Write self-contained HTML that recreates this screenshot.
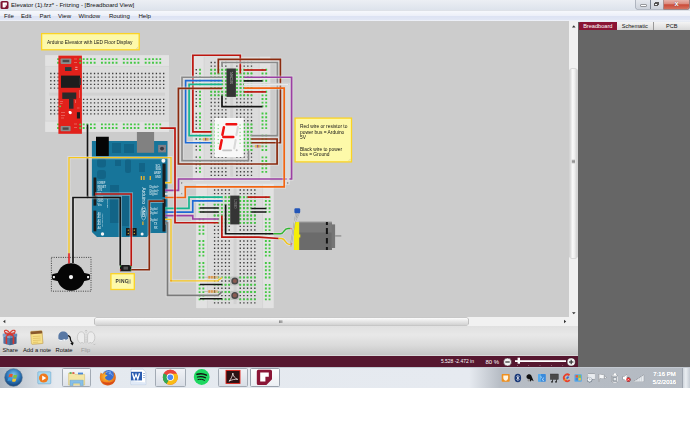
<!DOCTYPE html>
<html>
<head>
<meta charset="utf-8">
<title>Fritzing</title>
<style>
html,body{margin:0;padding:0;}
body{width:690px;height:424px;background:#ffffff;overflow:hidden;position:relative;font-family:"Liberation Sans",sans-serif;}
.abs{position:absolute;}
#titlebar{left:0;top:0;width:690px;height:10px;background:linear-gradient(#eceff4,#dde3ec);}
#titleline{left:0;top:9.600px;width:690px;height:1.400px;background:linear-gradient(#c9ced6,#f2f4f8);}
#title{left:11px;top:1px;font-size:6.05px;line-height:8px;color:#111;white-space:nowrap;}
#menubar{left:0;top:11px;width:690px;height:10px;background:linear-gradient(#f6f8fc 0%,#edf0f9 45%,#dde3f3 55%,#e2e7f5 88%,#f4f6fa 100%);}
.menu{top:12px;font-size:6.05px;line-height:8px;color:#111;white-space:nowrap;}
#canvas{left:0;top:21px;width:569px;height:295.500px;background:#cccccc;}
#vscroll{left:569px;top:21px;width:9px;height:296px;background:#f1f1f1;}
#rpanel{left:578px;top:21px;width:112px;height:346px;background:#666666;}
#hscroll{left:0;top:316.500px;width:578px;height:9.500px;background:#f1f1f1;}
#toolbar{left:0;top:326px;width:578px;height:30px;background:linear-gradient(#e0e0e0 0%,#e8e8e8 30%,#dadada 65%,#c6c6c6 96%,#e4e4e4 100%);}
#status{left:0;top:356px;width:578px;height:11px;background:#56172f;}
#taskbar{left:0;top:367px;width:690px;height:21px;background:linear-gradient(90deg,#aeb7c1 0,#c9d0d8 3.500%,#e4e9ef 8%,#e6eaf0 68%,#b7bdc5 72.500%,#b4bac2 100%);}
.tab{top:22px;height:8px;font-size:5.6px;line-height:8px;text-align:center;color:#111;background:linear-gradient(#f4f4f4,#d8d8d8);}
.tlabel{top:346px;font-size:5.8px;line-height:8px;color:#111;white-space:nowrap;}
.st{top:358px;font-size:4.950px;line-height:8px;color:#ffffff;white-space:nowrap;}
</style>
</head>
<body>
<div id="titlebar" class="abs"></div>
<div id="titleline" class="abs"></div>
<!-- fritzing app icon -->
<svg class="abs" style="left:0;top:1px" width="9" height="8" viewBox="0 0 9 8"><rect x="0.5" y="0" width="8" height="8" rx="1.6" fill="#7d1231"/><path d="M2.6 1.6h4.3v2.2l-2 2.6h-2.3z" fill="#fff"/><path d="M4.6 3.6h2.3l-2 2.8z" fill="#e9c9d2"/></svg>
<div id="title" class="abs">Elevator (1).fzz* - Fritzing - [Breadboard View]</div>
<!-- window buttons -->
<div class="abs" style="left:636px;top:0;width:53px;height:8.5px;border-radius:0 0 2px 2px;background:linear-gradient(#e6e9ee,#cdd2db);box-shadow:0 0 0 0.6px #8a929e;"></div>
<div class="abs" style="left:650px;top:0;width:0.7px;height:8.5px;background:#7a8390;"></div>
<div class="abs" style="left:663.5px;top:0;width:25.5px;height:8.5px;border-radius:0 0 2px 0;background:linear-gradient(#e6b3ab 0%,#db8a7d 45%,#cb4b39 52%,#d5715e 100%);box-shadow:0 0 0 0.6px #8a5a54;"></div>
<div class="abs" style="left:640.5px;top:4.6px;width:5px;height:1.6px;background:#fff;box-shadow:0 0 0 0.5px #555;"></div>
<div class="abs" style="left:655.300px;top:1.600px;width:3.800px;height:3.400px;border:0.600px solid #555;background:#eef0f3;box-sizing:border-box;"></div><div class="abs" style="left:654px;top:2.800px;width:3.800px;height:3.400px;border:0.600px solid #555;background:#f6f7f9;box-sizing:border-box;"></div>
<div class="abs" style="left:673px;top:0.2px;width:7px;height:8px;font-size:7.5px;line-height:8px;font-weight:bold;color:#fff;text-align:center;text-shadow:0 0 1px #522;">x</div>
<div id="menubar" class="abs"></div>
<div class="abs menu" style="left:4px">File</div>
<div class="abs menu" style="left:21px">Edit</div>
<div class="abs menu" style="left:39.5px">Part</div>
<div class="abs menu" style="left:58px">View</div>
<div class="abs menu" style="left:78.5px">Window</div>
<div class="abs menu" style="left:109px">Routing</div>
<div class="abs menu" style="left:138.5px">Help</div>

<div id="canvas" class="abs"></div>
<svg class="abs" style="left:0;top:21px;filter:blur(0.28px)" width="569" height="295.5" viewBox="0 21 569 295.5" font-family="Liberation Sans, sans-serif">
<rect x="45.25" y="55.25" width="123.75" height="76.65" fill="#dcdcdc"/>
<rect x="45.25" y="55.25" width="123.75" height="11" fill="#e2e2e2"/>
<rect x="45.25" y="121.25" width="123.75" height="10.6" fill="#e2e2e2"/>
<rect x="49.25" y="92.6" width="115.75" height="3" fill="#d1d1d1"/>
<path d="M45.25 66.4h123.75M45.25 121.2h123.75" stroke="#cdcdcd" stroke-width="0.5"/>
<path d="M50.17 73.5h114.34M50.17 77.14h114.34M50.17 80.79h114.34M50.17 84.44h114.34M50.17 88.08h114.34M50.17 99.3h114.34M50.17 102.94h114.34M50.17 106.59h114.34M50.17 110.23h114.34M50.17 113.88h114.34" stroke="#3c3c3c" stroke-width="1.35" stroke-dasharray="1.35 2.29" fill="none"/>
<path d="M57.18 59.1h103.96M57.18 62.75h103.96M57.18 124.4h103.96M57.18 128h103.96" stroke="#42c842" stroke-width="1.9" stroke-dasharray="1.9 1.75 1.9 1.75 1.9 1.75 1.9 1.75 1.9 5.39" fill="none"/>
<rect x="192.9" y="56.8" width="77.3" height="123.75" fill="#dcdcdc"/>
<rect x="192.9" y="56.8" width="11" height="123.75" fill="#e2e2e2"/>
<rect x="259.4" y="56.8" width="10.8" height="123.75" fill="#e2e2e2"/>
<rect x="230.2" y="60.8" width="3" height="115.75" fill="#d1d1d1"/>
<path d="M204.1 56.8v123.75M259.2 56.8v123.75" stroke="#cdcdcd" stroke-width="0.5"/>
<path d="M211.25 61.83v114.34M214.9 61.83v114.34M218.54 61.83v114.34M222.19 61.83v114.34M225.83 61.83v114.34M236.9 61.83v114.34M240.55 61.83v114.34M244.19 61.83v114.34M247.84 61.83v114.34M251.48 61.83v114.34" stroke="#3c3c3c" stroke-width="1.35" stroke-dasharray="1.35 2.29" fill="none"/>
<path d="M196.25 69.12v103.41" stroke="#3c3c3c" stroke-width="1.35" stroke-dasharray="1.35 2.29 1.35 2.29 1.35 2.29 1.35 2.29 1.35 5.94" fill="none"/>
<path d="M200 68.84v103.96M262.5 68.84v103.96M266.2 68.84v103.96" stroke="#42c842" stroke-width="1.9" stroke-dasharray="1.9 1.75 1.9 1.75 1.9 1.75 1.9 1.75 1.9 5.39" fill="none"/>
<path d="M211.25 68.84v27.41M214.9 68.84v27.41M218.54 68.84v27.41M222.19 68.84v27.41M225.83 68.84v27.41M236.9 68.84v27.41M240.55 68.84v27.41M244.19 68.84v27.41M247.84 68.84v27.41M251.48 68.84v27.41M211.25 123.52v27.41M214.9 123.52v27.41M218.54 123.52v27.41M222.19 123.52v27.41M225.83 123.52v27.41M236.9 123.52v27.41M240.55 123.52v27.41M244.19 123.52v27.41M247.84 123.52v27.41M251.48 123.52v27.41" stroke="#42c842" stroke-width="1.9" stroke-dasharray="1.9 1.75" fill="none"/>
<rect x="196.25" y="184.3" width="77.3" height="123.75" fill="#dcdcdc"/>
<rect x="196.25" y="184.3" width="11" height="123.75" fill="#e2e2e2"/>
<rect x="262.75" y="184.3" width="10.8" height="123.75" fill="#e2e2e2"/>
<rect x="233.55" y="188.3" width="3" height="115.75" fill="#d1d1d1"/>
<path d="M207.45 184.3v123.75M262.55 184.3v123.75" stroke="#cdcdcd" stroke-width="0.5"/>
<path d="M214.6 189.32v114.34M218.25 189.32v114.34M221.89 189.32v114.34M225.53 189.32v114.34M229.18 189.32v114.34M240.25 189.32v114.34M243.9 189.32v114.34M247.54 189.32v114.34M251.19 189.32v114.34M254.83 189.32v114.34" stroke="#3c3c3c" stroke-width="1.35" stroke-dasharray="1.35 2.29" fill="none"/>
<path d="M199.6 196.34v103.96M203.35 196.34v103.96M265.85 196.34v103.96M269.55 196.34v103.96" stroke="#42c842" stroke-width="1.9" stroke-dasharray="1.9 1.75 1.9 1.75 1.9 1.75 1.9 1.75 1.9 5.39" fill="none"/>
<path d="M214.6 196.34v27.41M218.25 196.34v27.41M221.89 196.34v27.41M225.53 196.34v27.41M229.18 196.34v27.41M240.25 196.34v27.41M243.9 196.34v27.41M247.54 196.34v27.41M251.19 196.34v27.41M254.83 196.34v27.41" stroke="#42c842" stroke-width="1.9" stroke-dasharray="1.9 1.75" fill="none"/>
<path d="M213.65 277.48h16.48M239.3 277.48h16.48M213.65 284.77h16.48M239.3 284.77h16.48M213.65 292.06h16.48M239.3 292.06h16.48M213.65 299.35h16.48M239.3 299.35h16.48" stroke="#42c842" stroke-width="1.9" stroke-dasharray="1.9 1.75" fill="none"/>
<!-- red power board -->
<rect x="58.4" y="55.6" width="23.5" height="78.2" fill="#e1211b"/>
<rect x="60.6" y="58.4" width="10.7" height="5.5" rx="0.8" fill="#8d8d8d"/><rect x="62.600" y="59.800" width="6.700" height="2.400" fill="#4a4a4a"/>
<rect x="65" y="67.1" width="6.5" height="3.9" fill="#2c3a3c"/>
<path d="M75.200 67.300h2.300M75.200 69.500h2.300" stroke="#f6dada" stroke-width="0.700"/>
<rect x="61" y="75.6" width="19" height="12.2" fill="#1d1d1d"/><rect x="79.500" y="78" width="1.500" height="7" fill="#3a3a3a"/>
<rect x="62.25" y="92.5" width="14" height="6.4" fill="#2a2a2a"/>
<rect x="69" y="98.9" width="4.5" height="9.8" fill="#2a2d30"/>
<rect x="76.9" y="112.2" width="3.1" height="6.3" fill="#1d1d1d"/>
<path d="M68.800 111.300c1.200-0.600 2.800 0 3 1.200c0.200 1.400-1.600 2.200-2.600 1.200c-0.600-0.800-0.900-1.700-0.400-2.400z" fill="#fff"/>
<circle cx="60.200" cy="106.300" r="0.900" fill="#5cd65c"/>
<path d="M60 101.500h3M60 103.500h2.500M61 112.500h4M61 115.500h4M61 118h3M75.500 100v3M77 108h2.500M74 59h3M74 62.500h3M74 124h3M74 127.500h3M79.500 90v8" stroke="#f4b8b4" stroke-width="0.500" opacity="0.800"/>
<rect x="60.6" y="126" width="10" height="5.2" rx="0.8" fill="#8d8d8d"/><rect x="62.600" y="127.400" width="6" height="2.400" fill="#4a4a4a"/>
<path d="M80.200 58.200a1 1 0 1 0 0.010 0zM80.200 61.800a1 1 0 1 0 0.010 0zM80.200 123.500a1 1 0 1 0 0.010 0zM80.200 127.100a1 1 0 1 0 0.010 0z" fill="#4fd04f"/>

<!-- arduino uno -->
<path d="M91.9 140.9H167.5V233.1H150.6L147 236.9H97L91.9 232Z" fill="#17759a"/>
<g fill="#126487">
<rect x="97" y="158.500" width="9" height="9" rx="3"/><rect x="97" y="170" width="9" height="9" rx="3"/>
<rect x="115" y="160" width="6" height="6"/><rect x="125" y="159" width="6" height="14" rx="2.500"/>
<rect x="139" y="163" width="6" height="9"/><rect x="110" y="185" width="9" height="38"/><rect x="122" y="196" width="7" height="30"/>
<rect x="112" y="143" width="9" height="10"/><rect x="124" y="144" width="10" height="9"/>
</g>
<rect x="96" y="136.75" width="12.8" height="19.4" fill="#050505"/>
<rect x="136.9" y="132" width="17.2" height="20.800" fill="#818181"/>
<rect x="158.1" y="144.9" width="7.900" height="7.500" fill="#7e7e86"/><circle cx="162" cy="148.600" r="2.400" fill="#3a3a42" stroke="#a4a4ac" stroke-width="0.500"/>
<circle cx="163.4" cy="160.75" r="2" fill="#f4f4f4"/><circle cx="102.5" cy="234" r="1.700" fill="#f4f4f4"/><circle cx="142.1" cy="234" r="1.500" fill="#f4f4f4"/>
<rect x="162.5" y="163.6" width="3.100" height="33.500" fill="#1c1c1c"/><rect x="162.5" y="199" width="3.100" height="32.500" fill="#1c1c1c"/>
<rect x="93.5" y="177.5" width="2.800" height="28.100" fill="#1c1c1c"/><rect x="93.5" y="210.6" width="2.800" height="20.700" fill="#1c1c1c"/>
<rect x="126" y="228" width="4.600" height="7.600" fill="#1a1a1a"/><rect x="132" y="228" width="4.600" height="7.600" fill="#1a1a1a"/>
<path d="M128.300 230.200h0.010M128.300 233.400h0.010M134.300 230.200h0.010M134.300 233.400h0.010" stroke="#d8b040" stroke-width="1.300" stroke-linecap="round"/>
<rect x="140.700" y="176" width="1.300" height="4" fill="#f0b428"/><rect x="143.300" y="176" width="1.300" height="4" fill="#f0b428"/><rect x="149.600" y="176" width="1.300" height="4" fill="#f0b428"/>
<rect x="142.300" y="221.500" width="1.200" height="3.500" fill="#f0b428"/>
<g font-size="2.600" fill="#e6f2f6" fill-opacity="0.780" font-weight="bold"><text x="155.500" y="166.800">SCL</text><text x="155.500" y="170.400">SDA</text><text x="154" y="174">AREF</text><text x="155" y="177.700">GND</text>
<text x="149.500" y="187.800">Digital~</text><text x="149.500" y="191.500">Digital~</text><text x="149.500" y="195.200">Digital</text><text x="149.500" y="209.800">Digital</text><text x="149.500" y="213.500">Digital</text><text x="149.500" y="220.700">Digital</text>
<text x="97.500" y="184">IOREF</text><text x="97.500" y="187.700">RESET</text><text x="97.500" y="191.300">3V3</text><text x="97.500" y="195">5V</text><text x="97.500" y="198.600">GND</text><text x="97.500" y="202.200">GND</text><text x="97.500" y="205.800">Vin</text><text x="97.500" y="214.500">A0</text><text x="97.500" y="218.100">A1</text><text x="97.500" y="221.700">A2</text><text x="97.500" y="225.300">A3</text><text x="97.500" y="228.900">A4</text><text x="154" y="225">TX</text><text x="154" y="228.800">RX</text></g>
<g fill="#e6f2f6"><text transform="translate(141.600 187.600) rotate(90)" font-size="4.700">Arduino</text><text transform="translate(142 207.800) rotate(90)" font-size="4.200" font-weight="bold">UNO</text></g>
<ellipse cx="143.600" cy="213.200" rx="2.500" ry="6.800" fill="none" stroke="#e6f2f6" stroke-width="0.500"/>
<g font-size="2.400" fill="#cfe6ee"><text transform="translate(106.500 199) rotate(90)">POWER</text><text transform="translate(101.800 213.500) rotate(90)">ANALOG IN</text></g>

<!-- 7 segment display -->
<rect x="214.500" y="118" width="29.100" height="39" fill="#f8f8f8"/>
<g stroke="#d9d9d9" stroke-width="2.100" stroke-linecap="round"><path d="M237.900 127l-1.500 8M235.700 140l-1.500 8.400"/><path d="M223 150.300h8.300" stroke="#c4c4c4" stroke-width="1.700"/></g><circle cx="236.700" cy="150.300" r="1" fill="#bdbdbd"/>
<g stroke="#f01212" stroke-width="2.500" stroke-linecap="round"><path d="M226.500 124.200h9.700M223.900 127.300l-1.500 7.400M223.300 136.900h10M221.700 140.200l-1.700 8.600"/></g>
<path d="M218.200 124.500v22M240.100 124.500v22" stroke="#49c949" stroke-width="1" stroke-dasharray="1 2.645"/>

<!-- ICs -->
<rect x="226.500" y="68.500" width="9.400" height="28.400" fill="#353535"/>
<text transform="translate(229.700 71.500) rotate(90)" font-size="3" fill="#bdbdbd">74HC595</text>
<rect x="230.200" y="195.600" width="9.300" height="28.800" fill="#353535"/>
<text transform="translate(233.700 199.500) rotate(90)" font-size="3" fill="#9a9a9a">L293D</text>

<!-- ping connector -->
<rect x="120" y="265" width="11.300" height="6.300" fill="#1a1a1a"/><rect x="123.500" y="266.600" width="4.500" height="3" fill="#555"/>
<circle cx="120.400" cy="266" r="0.700" fill="#3c3"/><circle cx="120.400" cy="270" r="0.700" fill="#e33"/><circle cx="131" cy="266" r="0.700" fill="#3c3"/><circle cx="131" cy="270" r="0.700" fill="#3c3"/>
<!-- pushbuttons -->
<g><rect x="230.600" y="276.900" width="8.400" height="8.200" rx="1" fill="#c9c9c9" stroke="#aaa" stroke-width="0.400"/><circle cx="234.800" cy="281" r="3.500" fill="#4a4a4a"/><circle cx="234.800" cy="281" r="2.100" fill="#8a5a52"/>
<rect x="230.600" y="291.300" width="8.400" height="8.200" rx="1" fill="#c9c9c9" stroke="#aaa" stroke-width="0.400"/><circle cx="234.800" cy="295.400" r="3.500" fill="#4a4a4a"/><circle cx="234.800" cy="295.400" r="2.100" fill="#8a5a52"/></g>
<path d="M87.5 124.400V197.500H95" stroke="#f4f4f4" stroke-opacity="0.38" stroke-width="3.5" fill="none"/><path d="M87.5 124.400V197.500H95" stroke="#141414" stroke-width="1.7" fill="none" stroke-linejoin="miter" />
<path d="M73 263V197.500H88" stroke="#f4f4f4" stroke-opacity="0.38" stroke-width="3.5" fill="none"/><path d="M73 263V197.500H88" stroke="#141414" stroke-width="1.7" fill="none" stroke-linejoin="miter" />
<path d="M165 182.750H171V157.600H69V253.200" stroke="#f4f4f4" stroke-opacity="0.38" stroke-width="3.1500000000000004" fill="none"/><path d="M165 182.750H171V157.600H69V253.200" stroke="#f7c61c" stroke-width="1.35" fill="none" stroke-linejoin="miter" />
<path d="M165 219.400H171V280.800H217.750L222.250 277.250" stroke="#f4f4f4" stroke-opacity="0.38" stroke-width="3.1500000000000004" fill="none"/><path d="M165 219.400H171V280.800H217.750L222.250 277.250" stroke="#f7c61c" stroke-width="1.35" fill="none" stroke-linejoin="miter" />
<path d="M165 222.900H167.500V295.400H218L222.250 291.500" stroke="#f4f4f4" stroke-opacity="0.38" stroke-width="3.55" fill="none"/><path d="M165 222.900H167.500V295.400H218L222.250 291.500" stroke="#7a7a7a" stroke-width="1.75" fill="none" stroke-linejoin="miter" />
<path d="M95 194H131.250V266" stroke="#f4f4f4" stroke-opacity="0.38" stroke-width="3.5" fill="none"/><path d="M95 194H131.250V266" stroke="#bd140e" stroke-width="1.7" fill="none" stroke-linejoin="miter" />
<path d="M95 197.500H120.250V265.600" stroke="#f4f4f4" stroke-opacity="0.38" stroke-width="3.5" fill="none"/><path d="M95 197.500H120.250V265.600" stroke="#141414" stroke-width="1.7" fill="none" stroke-linejoin="miter" />
<path d="M164 201.200H149.300V269.750H131.250" stroke="#f4f4f4" stroke-opacity="0.38" stroke-width="3.5" fill="none"/><path d="M164 201.200H149.300V269.750H131.250" stroke="#8a2a0e" stroke-width="1.7" fill="none" stroke-linejoin="miter" />
<path d="M211.250 131.900H192.900V55.250H240.300V73.600" stroke="#f4f4f4" stroke-opacity="0.38" stroke-width="3.5" fill="none"/><path d="M211.250 131.900H192.900V55.250H240.300V73.600" stroke="#bd140e" stroke-width="1.7" fill="none" stroke-linejoin="miter" />
<path d="M218.300 73.600V59.400H280.400V142.750H251.250" stroke="#f4f4f4" stroke-opacity="0.38" stroke-width="3.5" fill="none"/><path d="M218.300 73.600V59.400H280.400V142.750H251.250" stroke="#8a2a0e" stroke-width="1.7" fill="none" stroke-linejoin="miter" />
<path d="M222 66.200V62.500H277.400V135.600H251.250" stroke="#f4f4f4" stroke-opacity="0.38" stroke-width="3.5" fill="none"/><path d="M222 66.200V62.500H277.400V135.600H251.250" stroke="#8a8a8a" stroke-width="1.7" fill="none" stroke-linejoin="miter" />
<path d="M222 77.250H182V160.600H248.500V150.500" stroke="#f4f4f4" stroke-opacity="0.38" stroke-width="3.5" fill="none"/><path d="M222 77.250H182V160.600H248.500V150.500" stroke="#8a8a8a" stroke-width="1.7" fill="none" stroke-linejoin="miter" />
<path d="M222 80.700H185.600V142.750H211.250" stroke="#f4f4f4" stroke-opacity="0.38" stroke-width="3.5" fill="none"/><path d="M222 80.700H185.600V142.750H211.250" stroke="#1e6ad4" stroke-width="1.7" fill="none" stroke-linejoin="miter" />
<path d="M222 84.400H189.100V135.600H211.250" stroke="#f4f4f4" stroke-opacity="0.38" stroke-width="3.5" fill="none"/><path d="M222 84.400H189.100V135.600H211.250" stroke="#14b48e" stroke-width="1.7" fill="none" stroke-linejoin="miter" />
<path d="M222 88.300H178.400V164H277.100V139H251.250" stroke="#f4f4f4" stroke-opacity="0.38" stroke-width="3.5" fill="none"/><path d="M222 88.300H178.400V164H277.100V139H251.250" stroke="#8a2a0e" stroke-width="1.7" fill="none" stroke-linejoin="miter" />
<path d="M244 70H266" stroke="#f4f4f4" stroke-opacity="0.38" stroke-width="3.5" fill="none"/><path d="M244 70H266" stroke="#bd140e" stroke-width="1.7" fill="none" stroke-linejoin="miter" />
<path d="M244 91.900H266" stroke="#f4f4f4" stroke-opacity="0.38" stroke-width="3.5" fill="none"/><path d="M244 91.900H266" stroke="#bd140e" stroke-width="1.7" fill="none" stroke-linejoin="miter" />
<path d="M244 80.900H262.500" stroke="#f4f4f4" stroke-opacity="0.38" stroke-width="3.5" fill="none"/><path d="M244 80.900H262.500" stroke="#141414" stroke-width="1.7" fill="none" stroke-linejoin="miter" />
<path d="M244 77.250H291.600V179H178.500V190.300H165" stroke="#f4f4f4" stroke-opacity="0.38" stroke-width="3.5" fill="none"/><path d="M244 77.250H291.600V179H178.500V190.300H165" stroke="#9b3fa3" stroke-width="1.7" fill="none" stroke-linejoin="miter" />
<path d="M244 84.400H288V183.100H182V193.900H165" stroke="#f4f4f4" stroke-opacity="0.38" stroke-width="3.4000000000000004" fill="none"/><path d="M244 84.400H288V183.100H182V193.900H165" stroke="#a4a4a4" stroke-width="1.6" fill="none" stroke-linejoin="miter" />
<path d="M244 84.400H288V183.100H182V193.900H165" stroke="#f4f4f4" stroke-opacity="0.38" stroke-width="2.7" fill="none"/><path d="M244 84.400H288V183.100H182V193.900H165" stroke="#f2f2f2" stroke-width="0.9" fill="none" stroke-linejoin="miter" />
<path d="M244 88.100H284.200V186.900H185.300V197.500H165" stroke="#f4f4f4" stroke-opacity="0.38" stroke-width="3.5" fill="none"/><path d="M244 88.100H284.200V186.900H185.300V197.500H165" stroke="#f26411" stroke-width="1.7" fill="none" stroke-linejoin="miter" />
<path d="M222 95.600V106.600H262.500" stroke="#f4f4f4" stroke-opacity="0.38" stroke-width="3.5" fill="none"/><path d="M222 95.600V106.600H262.500" stroke="#141414" stroke-width="1.7" fill="none" stroke-linejoin="miter" />
<path d="M165 208.400H189V197.100H222.500" stroke="#f4f4f4" stroke-opacity="0.38" stroke-width="3.5" fill="none"/><path d="M165 208.400H189V197.100H222.500" stroke="#14b48e" stroke-width="1.7" fill="none" stroke-linejoin="miter" />
<path d="M165 212.100H192.750V200.900H222.500" stroke="#f4f4f4" stroke-opacity="0.38" stroke-width="3.5" fill="none"/><path d="M165 212.100H192.750V200.900H222.500" stroke="#1e6ad4" stroke-width="1.7" fill="none" stroke-linejoin="miter" />
<path d="M165 215.600H192.750V219H218.750" stroke="#f4f4f4" stroke-opacity="0.38" stroke-width="3.5" fill="none"/><path d="M165 215.600H192.750V219H218.750" stroke="#9b3fa3" stroke-width="1.7" fill="none" stroke-linejoin="miter" />
<path d="M160.500 128.200H175V222.750H218.500" stroke="#f4f4f4" stroke-opacity="0.38" stroke-width="3.5" fill="none"/><path d="M160.500 128.200H175V222.750H218.500" stroke="#bd140e" stroke-width="1.7" fill="none" stroke-linejoin="miter" />
<path d="M200 208.100H218.750M200 211.900H218.750M251.250 208.400H266.250M251.250 212.100H266.250M200 284.600H222.250M200 298.750H222.250" stroke="#f4f4f4" stroke-opacity="0.38" stroke-width="3.3" fill="none"/><path d="M200 208.100H218.750M200 211.900H218.750M251.250 208.400H266.250M251.250 212.100H266.250M200 284.600H222.250M200 298.750H222.250" stroke="#141414" stroke-width="1.5" fill="none" stroke-linejoin="miter" />
<path d="M247.500 197.100H269.750" stroke="#f4f4f4" stroke-opacity="0.38" stroke-width="3.5" fill="none"/><path d="M247.500 197.100H269.750" stroke="#bd140e" stroke-width="1.7" fill="none" stroke-linejoin="miter" />
<path d="M225.600 204.400V233.750H273.750" stroke="#f4f4f4" stroke-opacity="0.38" stroke-width="3.5" fill="none"/><path d="M225.600 204.400V233.750H273.750" stroke="#141414" stroke-width="1.7" fill="none" stroke-linejoin="miter" />
<path d="M273.500 233.750H280.500C284.500 233.750 283.500 228.500 288 228.500H290.200" stroke="#f4f4f4" stroke-opacity="0.38" stroke-width="3.2" fill="none"/><path d="M273.500 233.750H280.500C284.500 233.750 283.500 228.500 288 228.500H290.200" stroke="#2fb52f" stroke-width="1.4" fill="none" stroke-linejoin="miter" />
<path d="M221.900 215.600V237.100H258.750L278.750 238.500" stroke="#f4f4f4" stroke-opacity="0.38" stroke-width="3.5" fill="none"/><path d="M221.900 215.600V237.100H258.750L278.750 238.500" stroke="#bd140e" stroke-width="1.7" fill="none" stroke-linejoin="miter" />
<path d="M278.500 238.500H281.500C285.500 238.500 285.500 244.400 289 244.400H290.800" stroke="#f4f4f4" stroke-opacity="0.38" stroke-width="3.2" fill="none"/><path d="M278.500 238.500H281.500C285.500 238.500 285.500 244.400 289 244.400H290.800" stroke="#f2c414" stroke-width="1.4" fill="none" stroke-linejoin="miter" />
<path d="M200 139.2H212" stroke="#a8a8a8" stroke-width="0.600"/><rect x="202.64" y="137.90" width="6.72" height="2.600" rx="0.900" fill="#d9b888"/><rect x="203.54" y="137.90" width="0.900" height="2.600" fill="#e0c020"/><rect x="205.01" y="137.90" width="0.900" height="2.600" fill="#8a3a8a"/><rect x="206.48" y="137.90" width="0.900" height="2.600" fill="#c87a1a"/>
<path d="M252 146.25H263.75" stroke="#a8a8a8" stroke-width="0.600"/><rect x="254.59" y="144.95" width="6.58" height="2.600" rx="0.900" fill="#d9b888"/><rect x="255.49" y="144.95" width="0.900" height="2.600" fill="#e0c020"/><rect x="256.91" y="144.95" width="0.900" height="2.600" fill="#8a3a8a"/><rect x="258.33" y="144.95" width="0.900" height="2.600" fill="#c87a1a"/>
<path d="M203.75 277.25H222.25" stroke="#a8a8a8" stroke-width="0.600"/><rect x="207.82" y="275.95" width="10.36" height="2.600" rx="0.900" fill="#d9b888"/><rect x="208.72" y="275.95" width="0.900" height="2.600" fill="#e07a1a"/><rect x="211.49" y="275.95" width="0.900" height="2.600" fill="#e07a1a"/><rect x="214.26" y="275.95" width="0.900" height="2.600" fill="#7a4a1a"/>
<path d="M203.75 291.5H222.25" stroke="#a8a8a8" stroke-width="0.600"/><rect x="207.82" y="290.20" width="10.36" height="2.600" rx="0.900" fill="#d9b888"/><rect x="208.72" y="290.20" width="0.900" height="2.600" fill="#e07a1a"/><rect x="211.49" y="290.20" width="0.900" height="2.600" fill="#e07a1a"/><rect x="214.26" y="290.20" width="0.900" height="2.600" fill="#7a4a1a"/>
<g fill="#efefef" stroke="#888" stroke-width="0.300"><rect x="181.200" y="182.400" width="1.500" height="1.500"/><rect x="181.200" y="193.100" width="1.500" height="1.500"/><rect x="287.300" y="182.400" width="1.500" height="1.500"/></g>
<g fill="#f0a020"><rect x="170.300" y="280" width="1.500" height="1.500"/></g>
<!-- motor -->
<rect x="298.750" y="221.900" width="33.200" height="28.100" fill="#6b6b6b"/>
<rect x="298.750" y="221.900" width="33.200" height="10.600" fill="#7a7a7a"/>
<rect x="298.750" y="221.900" width="33.200" height="1.200" fill="#8e8e8e"/>
<rect x="331.900" y="224.400" width="3.200" height="23.600" fill="#757575"/>
<rect x="335.100" y="235.100" width="6.200" height="1.600" fill="#9a9a9a"/>
<path d="M326.900 222v3M326.900 228v6M326.900 238v5.500M326.900 247v3" stroke="#141414" stroke-width="2"/>
<path d="M293.900 221.900h5.300v28.100h-5.300zM299 234.500h1.300v3h-1.300z" fill="#f6ee08"/>
<path d="M296.200 213l-5.600 33.500M299 213l-4.600 9.500" stroke="#8c8c8c" stroke-width="1.500" fill="none"/>
<path d="M296.200 213l-5.600 33.500M299 213l-4.600 9.500" stroke="#f0f0f0" stroke-width="0.600" fill="none"/>
<rect x="294.400" y="208.200" width="5.800" height="5" rx="1.200" fill="#2456b8"/>
<path d="M290.300 228.300l1.500 0.600M290.800 244.300l1.400-0.600" stroke="#e44" stroke-width="1"/>

<!-- buzzer -->
<rect x="51.4" y="257.4" width="39.600" height="33.800" fill="none" stroke="#1c1c1c" stroke-width="0.800" stroke-dasharray="1 1.300"/>
<path d="M58.500 272.800l-5.500 1.200a1.200 1.200 0 0 0 -1 1.200v3.600a1.200 1.200 0 0 0 1 1.200l5.500 1.200zM83.500 272.800l5.500 1.200a1.200 1.200 0 0 1 1 1.200v3.600a1.200 1.200 0 0 1 -1 1.200l-5.500 1.200z" fill="#060606"/>
<circle cx="71" cy="277" r="13.800" fill="#050505"/>
<circle cx="71" cy="277.100" r="2.100" fill="#f6f6f6"/>
<rect x="52.900" y="276" width="2" height="2.200" fill="#f0f0f0"/><rect x="87.100" y="276" width="2" height="2.200" fill="#f0f0f0"/>
<path d="M69 253.200V263.500" stroke="#e81414" stroke-width="1.500"/>

<!-- notes -->
<rect x="41.6" y="33.6" width="97.6" height="16.2" fill="#fdf9a9" stroke="#fbd324" stroke-width="1.3"/>
<text x="47" y="43.9" font-size="4.8" fill="#151515">Arduino Elevator with LED Floor Display</text>
<path d="M136.2 48.800l2-2M137.400 48.800l0.800-0.800" stroke="#b9b38a" stroke-width="0.400"/>
<rect x="295.1" y="118.1" width="56.4" height="43.8" fill="#fdf9a9" stroke="#fbd324" stroke-width="1.3"/>
<g font-size="4.85" fill="#151515"><text x="300" y="127.9">Red wire or resistor to</text><text x="300" y="133.55">power bus = Arduino</text><text x="300" y="139.2">5V</text><text x="300" y="150.5">Black wire to power</text><text x="300" y="156.15">bus = Ground</text></g>
<path d="M348.5 160.900l2-2M349.700 160.900l0.800-0.800" stroke="#b9b38a" stroke-width="0.400"/>
<rect x="110.9" y="273.7" width="23.4" height="15.8" fill="#fdf9a9" stroke="#fbd324" stroke-width="1.3"/>
<text x="115.6" y="283.2" font-size="4.9" font-weight="bold" fill="#333" letter-spacing="0.35">PING</text><text x="127.2" y="283.400" font-size="5" fill="#8a8a6a" letter-spacing="-0.5">)))</text>
</svg>
<div id="vscroll" class="abs"></div>
<!-- vscroll thumb & arrows -->
<div class="abs" style="left:570.400px;top:69px;width:6.800px;height:189px;background:linear-gradient(90deg,#d6d6d6,#f8f8f8 35%,#f2f2f2 60%,#d0d0d0);border-radius:1.500px;box-shadow:0 0 0 0.600px #c2c2c2;"></div>
<svg class="abs" style="left:570px;top:21px" width="8" height="297" viewBox="0 0 8 297"><path d="M2 6.400L3.800 4.300L5.600 6.400z" fill="#333"/><path d="M2 291.200L3.800 293.300L5.600 291.200z" fill="#333"/><path d="M1.800 139.300h3.200M1.800 140.500h3.200M1.800 141.700h3.200" stroke="#555" stroke-width="0.600"/></svg>
<div id="rpanel" class="abs"></div>
<!-- tabs -->
<div class="abs" style="left:578px;top:21px;width:112px;height:1px;background:#e8ecf4;"></div>
<div class="abs tab" style="left:579px;width:37.5px;background:#8a1433;color:#fff;border-radius:1.5px 0 0 0;">Breadboard</div>
<div class="abs tab" style="left:616.5px;width:36.5px;">Schematic</div>
<div class="abs tab" style="left:653.5px;width:36.5px;">PCB</div>
<div class="abs" style="left:653px;top:22px;width:0.6px;height:8px;background:#999;"></div>

<div id="hscroll" class="abs"></div>
<div class="abs" style="left:94.500px;top:318.300px;width:373px;height:6.800px;background:linear-gradient(#fcfcfc,#e8e8e8 45%,#d2d2d2);border-radius:1.500px;box-shadow:0 0 0 0.600px #9e9e9e;"></div>
<svg class="abs" style="left:0;top:318px" width="578" height="8" viewBox="0 0 578 8"><path d="M5.300 1.700L3.100 3.500L5.300 5.300z" fill="#333"/><path d="M564 1.700L566.200 3.500L564 5.300z" fill="#333"/><path d="M279.500 2.400v2.600M280.700 2.400v2.600M281.900 2.400v2.600" stroke="#555" stroke-width="0.600"/></svg>

<div id="toolbar" class="abs"></div>
<div class="abs tlabel" style="left:2.5px">Share</div>
<div class="abs tlabel" style="left:23px">Add a note</div>
<div class="abs tlabel" style="left:55.5px">Rotate</div>
<div class="abs tlabel" style="left:81px;color:#999">Flip</div>

<div id="status" class="abs"></div>
<div class="abs st" style="left:441px">5.528 -2.472 in</div>
<div class="abs st" style="left:485.5px;font-size:6px">80 %</div>


<!-- toolbar icons -->
<svg class="abs" style="left:0;top:326px" width="110" height="22" viewBox="0 326 110 22">
 <!-- share gift -->
 <path d="M3.400 336.400l6.400 1.600l6.600-1.600v7l-6.600 1.800l-6.400-1.800z" fill="#4f78a8"/>
 <path d="M9.800 338l6.600-1.600v7l-6.600 1.800z" fill="#3f628c"/>
 <path d="M2.700 333.800l7.100-1.300l7.300 1.300v2.700l-7.300 1.700l-7.100-1.700z" fill="#7ea2cb"/>
 <path d="M9.800 335.500l7.300-1.700v2.700l-7.300 1.700z" fill="#5f86b4"/>
 <path d="M5.600 335.900l1.600 0.400v7.900l-1.600-0.500zM12.600 336.300l1.700-0.400v7.800l-1.700 0.500z" fill="#d8362e"/>
 <path d="M4.800 333.500l8.800 2.200M15 333.500l-8.600 2.200" stroke="#d8362e" stroke-width="1.200"/>
 <path d="M9.800 333.400c-1.400-3.600-5-3.800-5.400-2.200c-0.400 1.600 3.200 2.400 5.400 2.200c2.200 0.200 5.800-0.600 5.400-2.200c-0.400-1.600-4-1.400-5.400 2.200z" fill="none" stroke="#dc3c32" stroke-width="1.100"/>
 <!-- note -->
 <g transform="rotate(-4 37 337.500)">
 <rect x="31.600" y="331.600" width="11.400" height="12.800" rx="0.600" fill="#b89a5a" opacity="0.500"/>
 <rect x="31" y="331" width="11.400" height="12.800" rx="0.600" fill="#f7e08a" stroke="#c4a24e" stroke-width="0.500"/>
 <rect x="31" y="331" width="11.400" height="2.800" rx="0.600" fill="#8a5a2c"/>
 <path d="M32.800 336.300h7.800M32.800 338.300h7.800M32.800 340.300h7.800M32.800 342.200h5" stroke="#d9b85a" stroke-width="0.600"/>
 </g>
 <!-- rotate -->
 <path d="M58.800 340.800l-0.400-4.200c0-3 2-5 4.800-5c2.800 0 5 2 5 4.600l0.200 3.200l-1.600 1.800l-1.200-1.400l-1.300 1.600l-1.400-1.600l-1.400 1.700z" fill="#f4f6f8" stroke="#c8d0da" stroke-width="0.400"/>
 <path d="M58.400 338.800v-2.200c0-3 2-5 4.800-5c2.800 0 5 2 5 4.600v2.200c-1.200 1.400-2.600 1.600-4 0.600c-1.600 1.200-4.200 1.400-5.800-0.200z" fill="#5878a4"/>
 <path d="M68 335.600c3.800 0.600 1.400 4.200 3.200 5.600c0.800 0.600 1.400 1.400 1.200 2.800" fill="none" stroke="#111" stroke-width="1.300"/><path d="M70.200 343.200l2.400 2.300l1.200-3z" fill="#111"/>
 <!-- flip -->
 <path d="M84.600 342.400c-1 1.400-2.200 0.800-2.600-0.200c-0.500 1-1.800 1.200-2.400 0.200c-1.600-1-2.400-3.200-2.200-5.800c0.200-2.800 1.800-4.800 3.800-4.800c2 0 3.200 1.400 3.400 3.400z" fill="#ececec" stroke="#b4b4b4" stroke-width="0.600"/>
 <path d="M87.600 342.400c1 1.400 2.200 0.800 2.600-0.200c0.500 1 1.800 1.200 2.400 0.200c1.600-1 2.400-3.200 2.200-5.800c-0.200-2.800-1.800-4.800-3.800-4.800c-2 0-3.200 1.400-3.400 3.400z" fill="#ececec" stroke="#b4b4b4" stroke-width="0.600"/>
 <path d="M86.100 330.400v13.800" stroke="#a8a8a8" stroke-width="0.500" stroke-dasharray="1 0.700"/>
 <path d="M84.800 331.200l1.300-0.900l1.300 0.900M93.400 343.800l1 1.100l1-1.100" stroke="#a8a8a8" stroke-width="0.500" fill="none"/>
</svg>
<!-- status slider -->
<svg class="abs" style="left:500px;top:356px" width="78" height="11" viewBox="500 356 78 11">
 <circle cx="507.5" cy="362" r="4" fill="#f4f4f4" stroke="#2a0a16" stroke-width="0.5"/><rect x="505.3" y="361.4" width="4.4" height="1.2" fill="#333"/>
 <rect x="515" y="360.2" width="51" height="1.8" fill="#fff"/>
 <rect x="517.6" y="357.7" width="2.4" height="6" fill="#fff"/>
 <g fill="#a88896"><rect x="517" y="365" width="0.8" height="0.8"/><rect x="528.3" y="365" width="0.8" height="0.8"/><rect x="539.6" y="365" width="0.8" height="0.8"/><rect x="551" y="365" width="0.8" height="0.8"/><rect x="562.3" y="365" width="0.8" height="0.8"/></g>
 <circle cx="571.2" cy="362" r="4.1" fill="#f4f4f4" stroke="#2a0a16" stroke-width="0.5"/><rect x="569" y="361.4" width="4.4" height="1.2" fill="#333"/><rect x="570.6" y="359.8" width="1.2" height="4.4" fill="#333"/>
</svg>

<div id="taskbar" class="abs"></div>
<div class="abs" style="left:0;top:367px;width:690px;height:1px;background:#c3c9d1;"></div>
<!-- taskbar buttons -->
<div class="abs" style="left:61.5px;top:367.5px;width:29.5px;height:19.5px;box-sizing:border-box;border:0.7px solid #a2aab4;border-radius:1.5px;background:linear-gradient(#f4f6f9,#dde2e9);"></div>
<div class="abs" style="left:155px;top:367.5px;width:30.5px;height:19.5px;box-sizing:border-box;border:0.7px solid #a2aab4;border-radius:1.5px;background:linear-gradient(#f0f2f6,#d9dee6);"></div>
<div class="abs" style="left:218.3px;top:367.5px;width:30px;height:19.5px;box-sizing:border-box;border:0.7px solid #a2aab4;border-radius:1.5px;background:linear-gradient(#f0f2f6,#d9dee6);"></div>
<div class="abs" style="left:249.5px;top:367.5px;width:30.5px;height:19.5px;box-sizing:border-box;border:0.7px solid #9aa2ad;border-radius:1.5px;background:linear-gradient(#fbfcfd,#eceff3);"></div>
<svg class="abs" style="left:0;top:367px" width="690" height="21" viewBox="0 367 690 21">
 <defs>
  <radialGradient id="orb" cx="0.5" cy="0.35" r="0.7"><stop offset="0" stop-color="#7fc4ee"/><stop offset="0.55" stop-color="#2a74b8"/><stop offset="1" stop-color="#123a6a"/></radialGradient>
  <radialGradient id="ff" cx="0.45" cy="0.4" r="0.7"><stop offset="0" stop-color="#ffcf3a"/><stop offset="0.6" stop-color="#f0801c"/><stop offset="1" stop-color="#c8420e"/></radialGradient>
 </defs>
 <!-- start orb -->
 <circle cx="13.5" cy="377.5" r="8.8" fill="url(#orb)" stroke="#4a6a8a" stroke-width="0.6"/>
 <path d="M9.3 374.2c1.3-0.8 2.4-0.7 3.6 0l-0.8 3c-1.2-0.7-2.3-0.8-3.6 0z" fill="#e8552e"/>
 <path d="M13.8 374.5c1.2 0.7 2.3 0.8 3.6 0l-0.8 3c-1.3 0.8-2.4 0.7-3.6 0z" fill="#7cc142"/>
 <path d="M8.3 378c1.3-0.8 2.4-0.7 3.6 0l-0.8 3c-1.2-0.7-2.3-0.8-3.6 0z" fill="#3a9be0"/>
 <path d="M12.8 378.3c1.2 0.7 2.3 0.8 3.6 0l-0.8 3c-1.3 0.8-2.4 0.7-3.6 0z" fill="#f8c62a"/>
 <!-- media player -->
 <rect x="37.8" y="371.8" width="13" height="12" rx="0.8" fill="#a8d8f0" stroke="#6aa6cc" stroke-width="0.6"/>
 <circle cx="43.6" cy="378" r="4.6" fill="#f07a1e"/><path d="M42.2 375.6v4.8l4-2.4z" fill="#fff"/>
 <!-- explorer -->
 <path d="M68.600 373.200h5.400l1 1.200h9.600v10.600h-16z" fill="#f4e6a4" stroke="#d2b862" stroke-width="0.500"/>
 <rect x="69.6" y="372.2" width="2" height="1.6" fill="#4aa84a"/><rect x="72.4" y="372.2" width="2" height="1.6" fill="#d84a3a"/><rect x="78" y="372.6" width="5" height="1.8" fill="#4a88d8"/>
 <path d="M70 380.2h13.2v5.4h-3v-2.4h-7.2v2.4h-3z" fill="#86bfe8" stroke="#5a98c8" stroke-width="0.400"/>
 <!-- firefox -->
 <circle cx="108.600" cy="376.400" r="6.400" fill="#3b6fd0"/>
 <path d="M106 372.500c1.400-1 3.400-1.200 4.800-0.400c-1 0.200-1.600 0.800-1.800 1.600c1.600-0.400 3 0.400 3.600 1.800" fill="none" stroke="#7fb0f0" stroke-width="1"/>
 <path d="M100.800 372.600c0.600 0.800 1.400 1.200 2.400 1.200c0.600-1.200 1.800-2 3.200-2.200c-0.800 0.800-1.200 1.800-1 2.800c0.800 0.200 1.600 0.600 2.200 1.400c-1.200 0.200-2.200 0.800-2.600 1.800c0.400 1.800 2.200 3 4.200 2.800c2.600-0.200 4.400-2.400 4.600-5c0.200-1.600-0.200-3.200-1-4.400c1.800 1.400 3 3.800 3 6.400c0 4.400-3.600 8-8 8c-4.400 0-8-3.600-8-8c0-1.800 0.400-3.400 1-4.800z" fill="url(#ff)"/>
 <path d="M101.400 381c1.400 2.200 3.800 3.800 6.600 3.800c3.400 0 6.400-2.200 7.400-5.200c-1.600 2.200-4.200 3.400-7 3c-2.800-0.200-5.200-0.400-7-1.600z" fill="#d8481a"/>
 <!-- word -->
 <path d="M131 369.2h11.800l3 2.800v12.600h-14.800z" fill="#fff" stroke="#9ab4d8" stroke-width="0.5"/>
 <rect x="131" y="371.8" width="11" height="8.6" fill="#2a5cb0"/>
 <path d="M132.500 373.200l1.700 6l1.800-4.600l1.800 4.600l1.700-6" fill="none" stroke="#fff" stroke-width="1.300"/>
 <path d="M143 373.500h2M143 375.500h2M143 377.500h2" stroke="#6a8ac0" stroke-width="0.6"/>
 <path d="M131.300 381l14.500 1.600v2h-14.500z" fill="#dfe9f7"/>
 <!-- chrome -->
 <circle cx="170.300" cy="377.200" r="7.500" fill="#e8453c"/>
 <path d="M170.300 377.200l-6.500-3.750a7.500 7.500 0 0 0 2.750 10.250z" fill="#34a853"/>
 <path d="M170.300 377.200l-3.750 6.500a7.500 7.500 0 0 0 10.250-2.750 7.500 7.500 0 0 0 0-7.500h-7.500z" fill="#f9bc15"/>
 <path d="M163.800 373.450a7.500 7.500 0 0 1 13 0z" fill="#e8453c"/>
 <path d="M170.300 377.200l-3.750 6.500a7.500 7.500 0 0 1-2.750-10.250z" fill="#34a853"/>
 <circle cx="170.300" cy="377.200" r="3.600" fill="#fff"/><circle cx="170.300" cy="377.200" r="2.800" fill="#4a8af4"/>
 <!-- spotify -->
 <circle cx="201.700" cy="377" r="7.900" fill="#1ed760"/>
 <path d="M197 374.300c3.200-1 6.600-0.700 9.400 0.900" fill="none" stroke="#111" stroke-width="1.500" stroke-linecap="round"/>
 <path d="M197.500 377c2.800-0.800 5.600-0.500 8 0.800" fill="none" stroke="#111" stroke-width="1.250" stroke-linecap="round"/>
 <path d="M198 379.600c2.300-0.600 4.500-0.400 6.400 0.700" fill="none" stroke="#111" stroke-width="1" stroke-linecap="round"/>
 <!-- acrobat -->
 <rect x="226" y="370.400" width="14" height="13" fill="#2b1114" stroke="#e3231a" stroke-width="0.900"/>
 <path d="M229 381.200c2.200-2.400 3.600-5.400 3.800-8.200c0.300 3 2 5.400 5 6.400c-2.800-0.400-6 0.200-8.800 1.800z" fill="none" stroke="#f2e6e6" stroke-width="0.800"/>
 <!-- fritzing -->
 <path d="M258.300 369.800h12.200a1.500 1.500 0 0 1 1.500 1.500v8l-5.600 5.700h-8.100a1.500 1.500 0 0 1-1.500-1.500v-12.200a1.500 1.500 0 0 1 1.500-1.500z" fill="#8a1636"/>
 <path d="M260.200 372.600h8.600v4.200h-3.400v4.600h-5.200z" fill="#fff"/>
 <!-- tray icons -->
 <rect x="501.700" y="374" width="8" height="7.800" rx="0.800" fill="#f0901e"/><path d="M503.300 375.600h4.800v2.400c0 1.400-1.200 2.400-2.400 2.800c-1.200-0.400-2.400-1.400-2.400-2.800z" fill="#fff4e0"/>
 <ellipse cx="517.800" cy="378" rx="3.300" ry="4.200" fill="#1a3a7a"/><path d="M516.400 376.300l2.800 3l-1.400 1.400v-5.400l1.400 1.400l-2.800 3" fill="none" stroke="#fff" stroke-width="0.600"/>
 <path d="M526.500 376c1-2 3.600-2.400 4.800-0.600l2.400 5.800l-2.200-1.200l-1 1.800l-1.200-2.800c-1.600 0.400-3.200-1-2.800-3z" fill="#111"/><circle cx="528.800" cy="380.300" r="1.200" fill="#999"/>
 <rect x="538" y="374" width="7.800" height="7.800" rx="0.800" fill="#3a8adc"/><path d="M540 376l1.600 1.200l-1.600 1.200M543.600 377.500l-1.200 2.500l1.600 0.800" stroke="#d8f0ff" stroke-width="0.700" fill="none"/><rect x="538" y="374" width="3" height="7.800" fill="#6ac0f4" opacity="0.600"/>
 <rect x="550.300" y="374" width="8" height="5.400" fill="#4a4a4a" stroke="#2a2a2a" stroke-width="0.400"/><path d="M552.500 379.500v2.200M556.500 379.500v2.200" stroke="#222" stroke-width="0.800"/><circle cx="552" cy="381.800" r="0.900" fill="#222"/><circle cx="556" cy="381.800" r="0.900" fill="#222"/>
 <path d="M569.500 375.200a3.400 3.400 0 1 0 0.200 5" fill="none" stroke="#e8402a" stroke-width="1.800"/><path d="M562.800 381.600l3.200-3.600l1.400 1.200z" fill="#f4a02a"/><path d="M566 378l2-2l1.200 1.200l-2 2z" fill="#3a6ad0"/>
 <rect x="574.400" y="374.200" width="7.400" height="7.600" rx="0.800" fill="#5aa8e8"/><rect x="575.600" y="375.200" width="2.400" height="2.400" fill="#f0582a"/><rect x="578.400" y="375.200" width="2.400" height="2.400" fill="#8ac83a"/><rect x="575.600" y="378" width="2.400" height="2.400" fill="#3a8ae0"/><rect x="578.400" y="378" width="2.400" height="2.400" fill="#f8c82a"/>
 <g style="filter:drop-shadow(0 0 0.400px #59616b) drop-shadow(0 0 0.300px #59616b)">
 <rect x="588.600" y="374.200" width="6" height="4.600" fill="#e8ecf0" stroke="#fff" stroke-width="0.700"/><circle cx="589.600" cy="379.600" r="2.300" fill="#f4f6f8" stroke="#8a98a8" stroke-width="0.500"/><path d="M589.600 378.400v1.300h1" stroke="#5a6a7a" stroke-width="0.400" fill="none"/>
 <path d="M599 374.200v7.800" stroke="#fff" stroke-width="0.900"/><path d="M599.600 374.600c1.600-0.600 2.600 0.600 4.200 0v3.800c-1.600 0.600-2.600-0.600-4.200 0z" fill="#f4f6f8" stroke="#fff" stroke-width="0.400"/><path d="M604.600 376l2 1.200l-2 1.200z" fill="#fff"/>
 <rect x="612" y="375.400" width="5.400" height="7" rx="1.200" fill="none" stroke="#fff" stroke-width="0.900"/><rect x="613.400" y="373.200" width="2.600" height="2" fill="#fff"/><rect x="613.400" y="377.600" width="2.600" height="3" fill="#e4e8ec"/>
 <path d="M622.800 376.600h1.600l2.400-2.400v7.800l-2.400-2.400h-1.600z" fill="#fff"/><circle cx="628.400" cy="379.700" r="2.100" fill="#e02a2a"/><path d="M627.500 378.800l1.800 1.800M629.300 378.800l-1.800 1.800" stroke="#fff" stroke-width="0.500"/>
 <path d="M634.200 381.400l9.400-6.200v6.200z" fill="#e8ecf0" stroke="#fff" stroke-width="0.500"/><path d="M637 381.400v-1.800M639.200 381.400v-3.200M641.400 381.400v-4.700" stroke="#b4bac2" stroke-width="0.500"/>
 </g>
</svg>
<div class="abs" style="left:648px;top:370px;width:33px;height:8px;font-size:6px;line-height:8px;color:#fff;text-align:center;text-shadow:0 0 0.350px #fff,0 0 0.350px #fff,0.300px 0.300px 0.500px #7c848e;">7:16 PM</div>
<div class="abs" style="left:648px;top:378px;width:33px;height:8px;font-size:6px;line-height:8px;color:#fff;text-align:center;text-shadow:0 0 0.350px #fff,0 0 0.350px #fff,0.300px 0.300px 0.500px #7c848e;">5/2/2016</div>
<div class="abs" style="left:683px;top:367.500px;width:7px;height:20px;background:linear-gradient(90deg,#cfd5dc,#e9edf1 40%,#c5ccd4);box-shadow:-0.600px 0 0 #8e96a0;"></div>

</body>
</html>
